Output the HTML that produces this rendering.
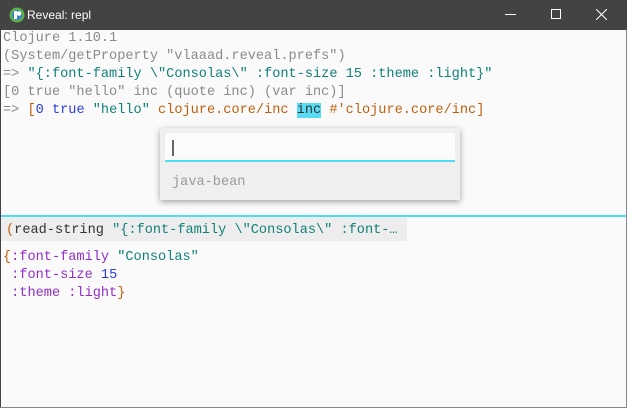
<!DOCTYPE html>
<html><head><style>
*{margin:0;padding:0;box-sizing:border-box}
body{width:627px;height:408px;background:#fafafa;position:relative;overflow:hidden;font-family:"Liberation Mono",monospace;font-size:13.6px}
.tb{position:absolute;left:0;top:0;width:627px;height:30px;background:#434343;color:#fff;font-family:"Liberation Sans",sans-serif;font-size:12px}
.ln{position:absolute;left:3px;white-space:pre;line-height:18px;height:18px}
.g{color:#8a8a8a}.s{color:#12807a}.n{color:#2a3fd8}.o{color:#c0600e}.k{color:#9130c8}.d{color:#333}
.bl{position:absolute;left:0;top:30px;width:1px;height:378px;background:#444}
.br{position:absolute;right:0;top:30px;width:1px;height:378px;background:#888}
.bb{position:absolute;left:0;bottom:0;width:627px;height:1px;background:#888}
</style></head><body>
<div class="tb">
<svg style="position:absolute;left:9px;top:7px" width="16" height="16"><circle cx="8" cy="8" r="7.5" fill="#5bb14a"/><circle cx="8" cy="8" r="5" fill="#3d7fd6"/><rect x="5" y="4" width="3" height="8" fill="#fff"/><circle cx="10" cy="6.5" r="2.3" fill="#fff"/></svg>
<span style="position:absolute;left:27px;top:8px">Reveal: repl</span>
<div style="position:absolute;left:505px;top:14px;width:11px;height:1px;background:#fff"></div>
<div style="position:absolute;left:551px;top:9px;width:10px;height:10px;border:1px solid #fff"></div>
<svg style="position:absolute;left:596px;top:9px" width="11" height="11"><path d="M0 0L11 11M11 0L0 11" stroke="#fff" stroke-width="1"/></svg>
</div>
<div class="ln g" style="top:30px">Clojure 1.10.1</div>
<div class="ln g" style="top:48px">(System/getProperty "vlaaad.reveal.prefs")</div>
<div class="ln" style="top:66px"><span class="g">=&gt; </span><span class="s">"{:font-family \"Consolas\" :font-size 15 :theme :light}"</span></div>
<div class="ln g" style="top:84px">[0 true "hello" inc (quote inc) (var inc)]</div>
<div class="ln" style="top:102px"><span class="g">=&gt; </span><span class="o">[</span><span class="n">0 true </span><span class="s">"hello" </span><span class="o">clojure.core/inc </span><span class="d" style="background:#57dcf4">inc</span><span class="o"> #'clojure.core/inc]</span></div>
<div style="position:absolute;left:160px;top:128px;width:300px;height:72px;background:#efefef;box-shadow:0 2px 6px rgba(0,0,0,.35)">
<div style="position:absolute;left:5px;top:5px;width:290px;height:29px;background:#fbfbfb;border-bottom:2px solid #4fdcf5"></div>
<div style="position:absolute;left:12px;top:12px;width:2px;height:16px;background:#666"></div>
<div style="position:absolute;left:12px;top:46px;color:#999;white-space:pre;line-height:18px">java-bean</div>
</div>
<div style="position:absolute;left:0;top:215px;width:627px;height:2px;background:#4fdcf5"></div>
<div style="position:absolute;left:1px;top:217px;width:406px;height:24px;background:#ededed"></div>
<div class="ln" style="top:222px;left:6px"><span class="o">(</span><span class="d">read-string </span><span class="s">"{:font-family \"Consolas\" :font-…</span></div>
<div class="ln" style="top:249px"><span class="o">{</span><span class="k">:font-family </span><span class="s">"Consolas"</span></div>
<div class="ln" style="top:267px"><span class="k"> :font-size </span><span class="n">15</span></div>
<div class="ln" style="top:285px"><span class="k"> :theme :light</span><span class="o">}</span></div>
<div class="bl"></div><div class="br"></div><div class="bb"></div>
</body></html>
